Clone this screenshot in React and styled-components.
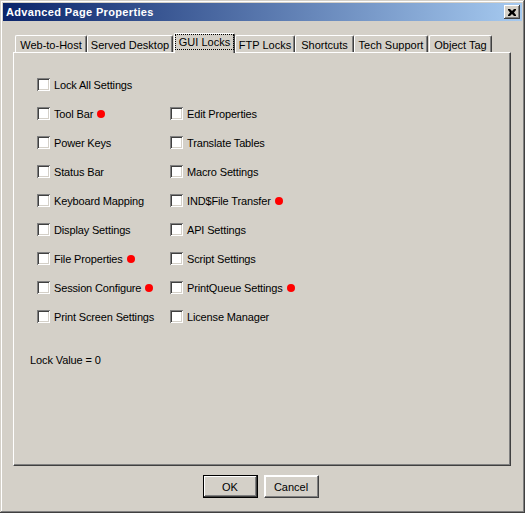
import React from "react";
import styled, { createGlobalStyle } from "styled-components";

const Global = createGlobalStyle`
  html, body { margin: 0; padding: 0; background: #D4D0C8; }
  body { font-family: "Liberation Sans", Arial, sans-serif; font-size: 11px; color: #000; }
`;

const Window = styled.div`
  box-sizing: border-box;
  width: 525px;
  height: 513px;
  padding: 3px;
  background: #d4d0c8;
  box-shadow: inset -1px -1px #404040, inset 1px 1px #d4d0c8,
    inset -2px -2px #808080, inset 2px 2px #ffffff;
  display: flex;
  flex-direction: column;
`;

const TitleBar = styled.div`
  height: 18px;
  display: flex;
  align-items: center;
  justify-content: space-between;
  padding: 0 2px 0 3px;
  background: linear-gradient(to right, #0a246a, #a6caf0);
`;

const TitleText = styled.div`
  color: #fff;
  font-weight: bold;
  font-size: 11px;
  letter-spacing: 0.35px;
`;

const CloseButton = styled.div`
  box-sizing: border-box;
  width: 16px;
  height: 14px;
  background: #d4d0c8;
  box-shadow: inset -1px -1px #404040, inset 1px 1px #ffffff,
    inset -2px -2px #808080, inset 2px 2px #d4d0c8;
  display: flex;
  align-items: center;
  justify-content: center;
`;

const Body = styled.div`
  display: flex;
  flex-direction: column;
  padding: 12px 11px 0 10px;
`;

const TabStrip = styled.div`
  display: flex;
  align-items: flex-end;
  height: 19px;
  padding-left: 2px;
  position: relative;
  z-index: 1;
`;

const Tab = styled.div`
  box-sizing: border-box;
  width: ${(p) => p.w}px;
  margin-left: ${(p) => p.ml || 0}px;
  height: ${(p) => (p.active ? 20 : 17)}px;
  margin-bottom: ${(p) => (p.active ? -1 : 0)}px;
  background: #d4d0c8;
  border-top: 1px solid #fff;
  border-left: 1px solid #fff;
  border-right: 1px solid #404040;
  border-top-left-radius: 2px;
  border-top-right-radius: 2px;
  box-shadow: inset -1px 0 #808080;
  display: flex;
  justify-content: center;
  align-items: flex-start;
  padding-top: ${(p) => (p.active ? 1 : 3)}px;
  white-space: nowrap;
  line-height: 13px;
`;

const FocusLabel = styled.span`
  box-sizing: border-box;
  outline: 1px dotted #000;
  outline-offset: 0;
  padding: 1px 3px 0;
  line-height: 13px;
`;

const Panel = styled.div`
  box-sizing: border-box;
  height: 414px;
  background: #d4d0c8;
  border-top: 1px solid #fff;
  border-left: 1px solid #fff;
  border-right: 1px solid #404040;
  border-bottom: 1px solid #404040;
  box-shadow: inset -1px -1px #808080;
  padding: 17px 0 0 16px;
  display: flex;
  flex-direction: column;
`;

const Grid = styled.div`
  display: grid;
  grid-template-columns: 133px auto;
  grid-auto-rows: 29px;
  margin-left: 7px;
`;

const CheckRow = styled.label`
  display: flex;
  align-items: center;
  grid-column: ${(p) => (p.full ? "1 / span 2" : "auto")};
  white-space: nowrap;
  letter-spacing: -0.15px;
`;

const Box = styled.span`
  box-sizing: border-box;
  width: 13px;
  height: 13px;
  flex: none;
  background: #fff;
  box-shadow: inset 1px 1px #808080, inset -1px -1px #ffffff,
    inset 2px 2px #404040, inset -2px -2px #d4d0c8;
  margin-right: 4px;
`;

const Dot = styled.span`
  width: 8px;
  height: 8px;
  border-radius: 50%;
  background: #ff0000;
  margin-left: 4px;
  flex: none;
`;

const LockValue = styled.div`
  margin-top: 23px;
  line-height: 13px;
  letter-spacing: -0.1px;
`;

const ButtonRow = styled.div`
  display: flex;
  justify-content: center;
  gap: 6px;
  margin-top: 9px;
  padding-right: 3px;
`;

const Button = styled.div`
  box-sizing: border-box;
  width: 55px;
  height: 23px;
  display: flex;
  align-items: center;
  justify-content: center;
  background: #d4d0c8;
  border: 1px solid ${(p) => (p.isDefault ? "#000" : "transparent")};
  box-shadow: ${(p) =>
    p.isDefault
      ? "inset -1px -1px #404040, inset 1px 1px #ffffff, inset -2px -2px #808080"
      : "inset -1px -1px #808080, inset 1px 1px #ffffff"};
  ${(p) =>
    !p.isDefault &&
    `border-color: #fff #404040 #404040 #fff;`}
`;

const tabs = [
  { label: "Web-to-Host", w: 72 },
  { label: "Served Desktop", w: 86 },
  { label: "GUI Locks", w: 61, active: true, ml: 1 },
  { label: "FTP Locks", w: 60 },
  { label: "Shortcuts", w: 59 },
  { label: "Tech Support", w: 74 },
  { label: "Object Tag", w: 63, ml: 1 },
];

const rows = [
  [["Tool Bar", true], ["Edit Properties", false]],
  [["Power Keys", false], ["Translate Tables", false]],
  [["Status Bar", false], ["Macro Settings", false]],
  [["Keyboard Mapping", false], ["IND$File Transfer", true]],
  [["Display Settings", false], ["API Settings", false]],
  [["File Properties", true], ["Script Settings", false]],
  [["Session Configure", true], ["PrintQueue Settings", true]],
  [["Print Screen Settings", false], ["License Manager", false]],
];

function Check({ label, dot, full }) {
  return (
    <CheckRow full={full}>
      <Box />
      <span>{label}</span>
      {dot && <Dot />}
    </CheckRow>
  );
}

export default function App() {
  return (
    <>
      <Global />
      <Window>
        <TitleBar>
          <TitleText>Advanced Page Properties</TitleText>
          <CloseButton>
            <svg width="8" height="7" viewBox="0 0 8 7">
              <path
                d="M0 0h2l2 2 2-2h2v1L6 3.5 8 6v1H6L4 5 2 7H0V6l2-2.5L0 1z"
                fill="#000"
              />
            </svg>
          </CloseButton>
        </TitleBar>
        <Body>
          <TabStrip>
            {tabs.map((t) => (
              <Tab key={t.label} w={t.w} ml={t.ml} active={t.active}>
                {t.active ? <FocusLabel>{t.label}</FocusLabel> : t.label}
              </Tab>
            ))}
          </TabStrip>
          <Panel>
            <Grid>
              <Check label="Lock All Settings" full />
              {rows.flat().map(([label, dot]) => (
                <Check key={label} label={label} dot={dot} />
              ))}
            </Grid>
            <LockValue>Lock Value = 0</LockValue>
          </Panel>
          <ButtonRow>
            <Button isDefault>OK</Button>
            <Button>Cancel</Button>
          </ButtonRow>
        </Body>
      </Window>
    </>
  );
}
